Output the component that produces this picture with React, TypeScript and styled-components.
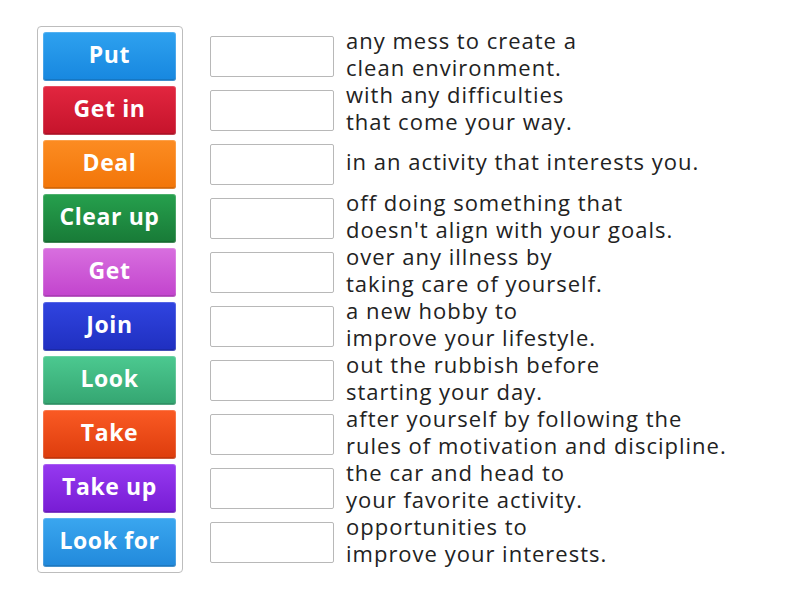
import React from 'react';
import styled, { createGlobalStyle } from 'styled-components';

const GlobalStyle = createGlobalStyle`
  body {
    margin: 0;
    background: #fff;
    font-family: "Open Sans", "Noto Sans", sans-serif;
  }
`;

const Page = styled.div`
  display: flex;
  align-items: flex-start;
  gap: 27px;
  padding: 26px 0 0 37px;
`;

const WordBank = styled.div`
  display: flex;
  flex-direction: column;
  gap: 5px;
  padding: 5px 6px 5px 5px;
  border: 1px solid #bdbdbd;
  border-radius: 4px;
`;

const Tile = styled.div<{ $top: string; $bottom: string }>`
  width: 133px;
  height: 49px;
  box-sizing: border-box;
  display: flex;
  align-items: center;
  justify-content: center;
  padding-bottom: 5px;
  border-radius: 3px;
  background: linear-gradient(${(p) => p.$top}, ${(p) => p.$bottom});
  box-shadow: inset 0 0 0 1px rgba(255, 255, 255, 0.18), inset 0 -2px 0 rgba(0, 0, 0, 0.12);
  color: #fff;
  font-size: 23px;
  font-weight: 700;
  letter-spacing: 0.6px;
`;

const Rows = styled.div`
  display: flex;
  flex-direction: column;
  gap: 5px;
  padding-top: 6px;
`;

const Row = styled.div`
  height: 49px;
  display: flex;
  align-items: center;
  gap: 12px;
`;

const Slot = styled.div`
  width: 124px;
  height: 41px;
  box-sizing: border-box;
  border: 1px solid #b8b8b8;
  border-radius: 2px;
  background: #fff;
  flex-shrink: 0;
`;

const Sentence = styled.div`
  margin-bottom: 6px;
  font-size: 22px;
  line-height: 27px;
  letter-spacing: 1px;
  color: #222;
  white-space: pre-line;
`;

const tiles = [
  { label: 'Put', top: '#2ea1ef', bottom: '#1787df' },
  { label: 'Get in', top: '#e2263f', bottom: '#c5132b' },
  { label: 'Deal', top: '#fc8c22', bottom: '#f27508' },
  { label: 'Clear up', top: '#26a04d', bottom: '#187a37' },
  { label: 'Get', top: '#d86fdf', bottom: '#c243cd' },
  { label: 'Join', top: '#3044e0', bottom: '#1f2fc0' },
  { label: 'Look', top: '#4cc990', bottom: '#34a571' },
  { label: 'Take', top: '#fa5a24', bottom: '#dd3c0c' },
  { label: 'Take up', top: '#9639f0', bottom: '#771cd4' },
  { label: 'Look for', top: '#3aa6ef', bottom: '#2189db' },
];

const sentences = [
  'any mess to create a\nclean environment.',
  'with any difficulties\nthat come your way.',
  'in an activity that interests you.',
  "off doing something that\ndoesn't align with your goals.",
  'over any illness by\ntaking care of yourself.',
  'a new hobby to\nimprove your lifestyle.',
  'out the rubbish before\nstarting your day.',
  'after yourself by following the\nrules of motivation and discipline.',
  'the car and head to\nyour favorite activity.',
  'opportunities to\nimprove your interests.',
];

export default function App() {
  return (
    <>
      <GlobalStyle />
      <Page>
        <WordBank>
          {tiles.map((t) => (
            <Tile key={t.label} $top={t.top} $bottom={t.bottom}>
              {t.label}
            </Tile>
          ))}
        </WordBank>
        <Rows>
          {sentences.map((s, i) => (
            <Row key={i}>
              <Slot />
              <Sentence>{s}</Sentence>
            </Row>
          ))}
        </Rows>
      </Page>
    </>
  );
}
